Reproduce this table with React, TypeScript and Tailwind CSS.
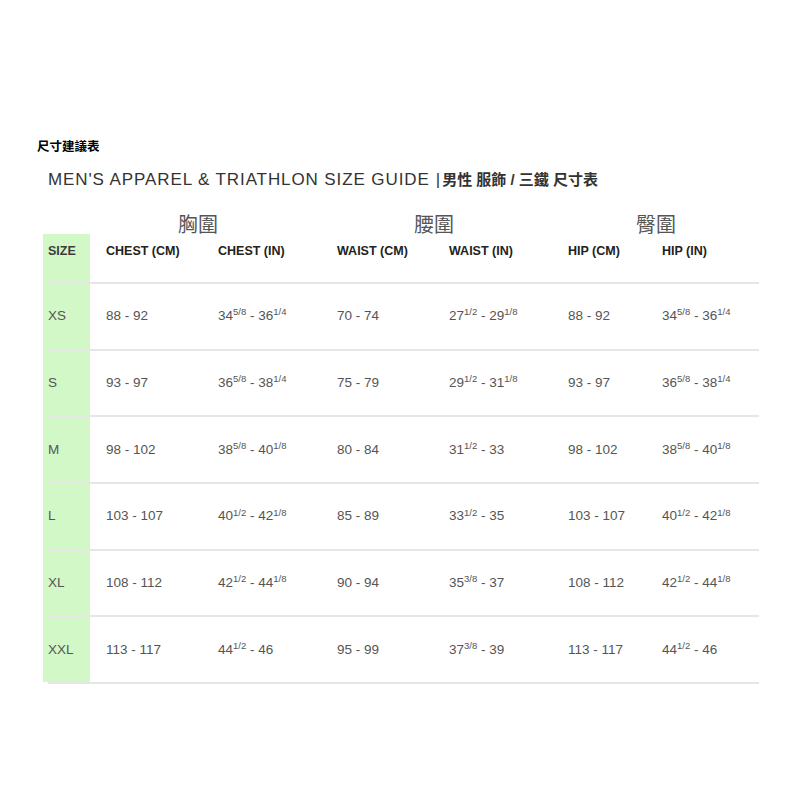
import React from "react";

type Cell = { main: string; a?: string; rest?: string; b?: string };

const V = (main: string, a?: string, rest?: string, b?: string): Cell => ({ main, a, rest, b });

const rows: { size: string; cells: Cell[] }[] = [
  { size: "XS", cells: [V("88 - 92"), V("34", "5/8", " - 36", "1/4"), V("70 - 74"), V("27", "1/2", " - 29", "1/8"), V("88 - 92"), V("34", "5/8", " - 36", "1/4")] },
  { size: "S", cells: [V("93 - 97"), V("36", "5/8", " - 38", "1/4"), V("75 - 79"), V("29", "1/2", " - 31", "1/8"), V("93 - 97"), V("36", "5/8", " - 38", "1/4")] },
  { size: "M", cells: [V("98 - 102"), V("38", "5/8", " - 40", "1/8"), V("80 - 84"), V("31", "1/2", " - 33"), V("98 - 102"), V("38", "5/8", " - 40", "1/8")] },
  { size: "L", cells: [V("103 - 107"), V("40", "1/2", " - 42", "1/8"), V("85 - 89"), V("33", "1/2", " - 35"), V("103 - 107"), V("40", "1/2", " - 42", "1/8")] },
  { size: "XL", cells: [V("108 - 112"), V("42", "1/2", " - 44", "1/8"), V("90 - 94"), V("35", "3/8", " - 37"), V("108 - 112"), V("42", "1/2", " - 44", "1/8")] },
  { size: "XXL", cells: [V("113 - 117"), V("44", "1/2", " - 46"), V("95 - 99"), V("37", "3/8", " - 39"), V("113 - 117"), V("44", "1/2", " - 46")] },
];

const headers = ["CHEST (CM)", "CHEST (IN)", "WAIST (CM)", "WAIST (IN)", "HIP (CM)", "HIP (IN)"];

function Val({ c }: { c: Cell }) {
  return (
    <span className="whitespace-nowrap">
      {c.main}
      {c.a && <sup className="text-[9.5px]">{c.a}</sup>}
      {c.rest}
      {c.b && <sup className="text-[9.5px]">{c.b}</sup>}
    </span>
  );
}

export default function App() {
  const font = { fontFamily: '"Liberation Sans", "Noto Sans CJK TC", sans-serif' };
  return (
    <div className="w-[800px] h-[800px] bg-white" style={font}>
      <div className="pt-[138px] pl-[37px] text-[12.5px] font-bold text-black leading-[18px]">尺寸建議表</div>
      <div className="mt-[12px] pl-[48px] flex items-center text-[#333] leading-[24px]">
        <span className="text-[17px] tracking-[0.9px]">MEN'S APPAREL &amp; TRIATHLON SIZE GUIDE</span>
        <span className="text-[17px] ml-[6px] mr-[2px]">|</span>
        <span className="text-[15px] font-bold">男性 服飾 / 三鐵 尺寸表</span>
      </div>

      <div className="mt-[23px] ml-[43px] w-[716px]">
        <div className="grid grid-cols-[47px_128px_119px_112px_119px_94px_97px] h-[19px] text-[20px] text-[#555] leading-[20px]">
          <div />
          <div className="col-span-2 pl-[88px]">胸圍</div>
          <div className="col-span-2 pl-[77px]">腰圍</div>
          <div className="col-span-2 pl-[68px]">臀圍</div>
        </div>

        <div className="flex">
          <div className="w-[47px] h-[448px] shrink-0 bg-[#d3f8c8]" />
          <div className="-ml-[42px] w-[711px] shrink-0">
            <div className="grid grid-cols-[42px_128px_119px_112px_119px_94px_97px] h-[48px] items-start pt-[10px] leading-[14px] text-[12.5px] font-bold text-[#222]">
              <div className="text-[#3c3c3c]">SIZE</div>
              {headers.map((h, i) => (
                <div key={h} className={i === 0 ? "pl-[16px]" : ""}>{h}</div>
              ))}
            </div>
            {rows.map((r) => (
              <div
                key={r.size}
                className="grid grid-cols-[42px_128px_119px_112px_119px_94px_97px] h-[66.7px] items-center text-[13.5px] text-[#555] border-t-2 border-[#e6e6e6]"
              >
                <div>{r.size}</div>
                {r.cells.map((c, i) => (
                  <div key={i} className={i === 0 ? "pl-[16px]" : ""}>
                    <Val c={c} />
                  </div>
                ))}
              </div>
            ))}
            <div className="border-t-2 border-[#e6e6e6]" />
          </div>
        </div>
      </div>
    </div>
  );
}
